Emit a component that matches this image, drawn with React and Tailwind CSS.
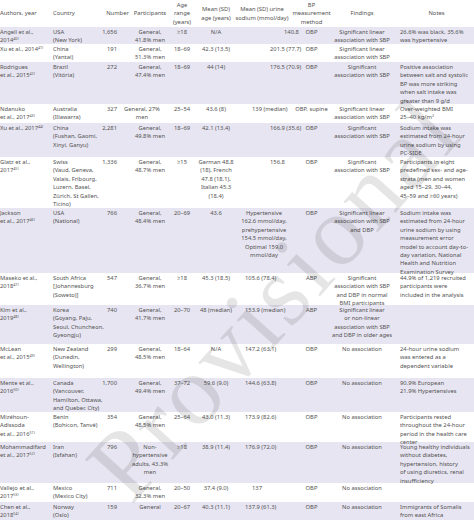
import React from 'react';

const L = 'bg-[#e7e5f1]';
const W = 'bg-white';

// reference mark, e.g. 2014⁴⁰⁾
const R = (n) => <span className="relative -top-[2px] text-[3.6px]">{n})</span>;

const WIDTH = ['w-[53px]', 'w-[50px]', 'w-[29px]', 'w-[36px]', 'w-[28px]', 'w-[40px]', 'w-[62px]', 'w-[27px]', 'w-[74px]', 'flex-1'];

// default alignment for body cells
const ALIGN = [
  'items-start',
  'items-start',
  'items-end pr-[15px]',
  'items-center',
  'items-center',
  'items-center',
  'items-start pl-[9px]',
  'items-center',
  'items-center',
  'items-start pl-[1px]',
];

const HEAD = [
  { l: ['Authors, year'], c: 'items-start' },
  { l: ['Country'], c: 'items-start' },
  ['Number'],
  ['Participants'],
  ['Age', 'range', '(years)'],
  ['Mean (SD)', 'age (years)'],
  { l: ['Mean (SD) urine', 'sodium (mmol/day)'], c: 'items-center pr-[10px]' },
  ['BP', 'measurement', 'method'],
  ['Findings'],
  ['Notes'],
];

const rows = [
  {
    bg: L, h: 'h-[17px]', c: [
      ['Angell et al.,', <>2014{R(40)}</>],
      ['USA', '(New York)'],
      ['1,656'],
      ['General,', '41.8% men'],
      ['≥18'],
      ['N/A'],
      { l: ['140.8'], c: 'items-start pl-[48px]' },
      ['OBP'],
      ['Significant linear', 'association with SBP'],
      ['26.6% was black, 35.6%', 'was hypertensive'],
    ],
  },
  {
    bg: W, h: 'h-[18px]', c: [
      [<>Xu et al., 2014{R(41)}</>],
      ['China', '(Yantai)'],
      ['191'],
      ['General,', '51.3% men'],
      ['18–69'],
      ['42.3 (13.5)'],
      { l: ['201.5 (77.7)'], c: 'items-start pl-[34px]' },
      ['OBP'],
      ['Significant linear', 'association with SBP'],
      [],
    ],
  },
  {
    bg: L, h: 'h-[42px]', c: [
      ['Rodrigues', <>et al., 2015{R(42)}</>],
      ['Brazil', '(Vitória)'],
      ['272'],
      ['General,', '47.4% men'],
      ['18–69'],
      ['44 (14)'],
      { l: ['176.5 (70.9)'], c: 'items-start pl-[34px]' },
      ['OBP'],
      ['Significant', 'association with SBP'],
      ['Positive association', 'between salt and systolic', 'BP was more striking', 'when salt intake was', 'greater than 9 g/d'],
    ],
  },
  {
    bg: W, h: 'h-[19px]', c: [
      ['Ndanuko', <>et al., 2017{R(43)}</>],
      ['Australia', '(Illawarra)'],
      ['327'],
      { l: ['General, 27%', 'men'], c: 'items-center pr-[16px]' },
      ['25–54'],
      ['43.6 (8)'],
      { l: ['139 (median)'], c: 'items-start pl-[16px]' },
      ['OBP, supine'],
      ['Significant linear', 'association with SBP'],
      ['Over-weighted BMI', <>25–40 kg/m<span className="relative -top-[2px] text-[3.6px]">2</span></>],
    ],
  },
  {
    bg: L, h: 'h-[34px]', c: [
      [<>Xu et al., 2017{R(44)}</>],
      ['China', '(Fushan, Gaomi,', 'Xinyi, Ganyu)'],
      ['2,281'],
      ['General,', '49.8% men'],
      ['18–69'],
      ['42.1 (13.4)'],
      { l: ['166.9 (35.6)'], c: 'items-start pl-[34px]' },
      ['OBP'],
      ['Significant', 'association with SBP'],
      ['Sodium intake was', 'estimated from 24-hour', 'urine sodium by using', 'PC-SIDE'],
    ],
  },
  {
    bg: W, h: 'h-[51px]', c: [
      ['Glatz et al.,', <>2017{R(45)}</>],
      ['Swiss', '(Vaud, Geneva,', 'Valais, Fribourg,', 'Luzern, Basel,', 'Zürich, St Gallen,', 'Ticino)'],
      ['1,336'],
      ['General,', '48.7% men'],
      ['≥15'],
      ['German 48.8', '(18), French', '47.8 (18.1),', 'Italian 45.3', '(18.4)'],
      { l: ['156.8'], c: 'items-start pl-[34px]' },
      ['OBP'],
      ['Significant', 'association with SBP'],
      ['Participants in eight', 'predefined sex- and age-', 'strata (men and women', 'aged 15–29, 30–44,', '45–59 and ≥60 years)'],
    ],
  },
  {
    bg: L, h: 'h-[65px]', c: [
      ['Jackson', <>et al., 2017{R(46)}</>],
      ['USA', '(National)'],
      ['766'],
      ['General,', '48.4% men'],
      ['20–69'],
      ['43.6'],
      { l: ['Hypertensive', '162.6 mmol/day,', 'prehypertensive', '154.5 mmol/day,', 'Optimal 159.0', 'mmol/day'], c: 'items-center pr-[6px]' },
      ['OBP'],
      ['Significant linear', 'association with SBP', 'and DBP'],
      ['Sodium intake was', 'estimated from 24-hour', 'urine sodium by using', 'measurement error', 'model to account day-to-', 'day variation, National', 'Health and Nutrition', 'Examination Survey'],
    ],
  },
  {
    bg: W, h: 'h-[32px]', c: [
      ['Maseko et al.,', <>2018{R(47)}</>],
      ['South Africa', '[Johannesburg', '(Soweto)]'],
      ['547'],
      ['General,', '36.7% men'],
      ['≥18'],
      ['45.3 (18.5)'],
      ['105.6 (78.4)'],
      ['ABP'],
      ['Significant', 'association with SBP', 'and DBP in normal', 'BMI participants'],
      ['44.9% of 1,219 recruited', 'participants were', 'included in the analysis'],
    ],
  },
  {
    bg: L, h: 'h-[39px]', c: [
      ['Kim et al.,', <>2019{R(48)}</>],
      ['Korea', '(Goyang, Paju,', 'Seoul, Chuncheon,', 'Gyeongju)'],
      ['740'],
      ['General,', '41.7% men'],
      ['20–70'],
      ['48 (median)'],
      ['153.9 (median)'],
      ['ABP'],
      ['Significant linear', 'or non-linear', 'association with SBP', 'and DBP in older ages'],
      [],
    ],
  },
  {
    bg: W, h: 'h-[34px]', c: [
      ['McLean', <>et al., 2015{R(49)}</>],
      ['New Zealand', '(Dunedin,', 'Wellington)'],
      ['299'],
      ['General,', '48.5% men'],
      ['18–64'],
      ['N/A'],
      ['147.2 (63.1)'],
      ['OBP'],
      ['No association'],
      ['24-hour urine sodium', 'was entered as a', 'dependent variable'],
    ],
  },
  {
    bg: L, h: 'h-[34px]', c: [
      ['Mente et al.,', <>2016{R(50)}</>],
      ['Canada', '(Vancouver,', 'Hamilton, Ottawa,', 'and Quebec City)'],
      ['1,700'],
      ['General,', '49.4% men'],
      ['37–72'],
      ['59.6 (9.0)'],
      ['144.6 (63.8)'],
      ['OBP'],
      ['No association'],
      ['90.9% European', '21.9% Hypertensives'],
    ],
  },
  {
    bg: W, h: 'h-[30px]', c: [
      ['Mizéhoun-', 'Adissoda', <>et al., 2016{R(51)}</>],
      ['Benin', '(Bohicon, Tanvé)'],
      ['354'],
      ['General,', '48.5% men'],
      ['25–64'],
      ['43.0 (11.3)'],
      ['173.9 (82.6)'],
      ['OBP'],
      ['No association'],
      ['Participants rested', 'throughout the 24-hour', 'period in the health care', 'center'],
    ],
  },
  {
    bg: L, h: 'h-[41px]', c: [
      ['Mohammadifard', <>et al., 2017{R(52)}</>],
      ['Iran', '(Isfahan)'],
      ['796'],
      ['Non-', 'hypertensive', 'adults, 43.3%', 'men'],
      ['≥18'],
      ['38.9 (11.4)'],
      ['176.9 (72.0)'],
      ['OBP'],
      ['No association'],
      ['Young healthy individuals', 'without diabetes,', 'hypertension, history', 'of using diuretics, renal', 'insufficiency'],
    ],
  },
  {
    bg: W, h: 'h-[19px]', c: [
      ['Vallejo et al.,', <>2017{R(53)}</>],
      ['Mexico', '(Mexico City)'],
      ['711'],
      ['General,', '32.3% men'],
      ['20–50'],
      ['37.4 (9.0)'],
      { l: ['137'], c: 'items-start pl-[16px]' },
      ['OBP'],
      ['No association'],
      [],
    ],
  },
  {
    bg: L, h: 'h-[22px]', c: [
      ['Chen et al.,', <>2018{R(54)}</>],
      ['Norway', '(Oslo)'],
      ['159'],
      ['General'],
      ['20–67'],
      ['40.3 (11.1)'],
      ['137.9 (61.3)'],
      ['OBP'],
      ['No association'],
      ['Immigrants of Somalis', 'from east Africa'],
    ],
  },
];

const Cell = ({ col, cell, head }) => {
  const lines = Array.isArray(cell) ? cell : cell.l;
  const align = Array.isArray(cell) ? (head ? 'items-center' : ALIGN[col]) : cell.c;
  return (
    <div className={`flex flex-col shrink-0 ${WIDTH[col]} ${align} ${head ? 'justify-center' : ''}`}>
      {lines.map((l, i) => (
        <div key={i} className="whitespace-nowrap">{l}</div>
      ))}
    </div>
  );
};

export default function App() {
  return (
    <div
      className="relative w-[474px] h-[520px] overflow-hidden bg-white text-[#525252] text-[5.8px] leading-[8.4px]"
      style={{ fontFamily: '"Noto Sans", "Open Sans", sans-serif' }}
    >
      <div className="flex h-[27px] bg-white">
        {HEAD.map((c, i) => (
          <Cell key={i} col={i} cell={c} head />
        ))}
      </div>
      {rows.map((r, ri) => (
        <div key={ri} className={`flex pt-[1px] ${r.h} ${r.bg}`}>
          {r.c.map((c, i) => (
            <Cell key={i} col={i} cell={c} />
          ))}
        </div>
      ))}

      {/* "Provisional" watermark over the table */}
      <div className="absolute left-[274px] top-[298px] pointer-events-none">
        <div
          className="-translate-x-1/2 -translate-y-1/2 -rotate-[48deg] whitespace-nowrap text-[100px] leading-none text-[#000]/10 tracking-[4px]"
          style={{ fontFamily: '"Liberation Serif", serif' }}
        >
          Provisional
        </div>
      </div>
    </div>
  );
}
